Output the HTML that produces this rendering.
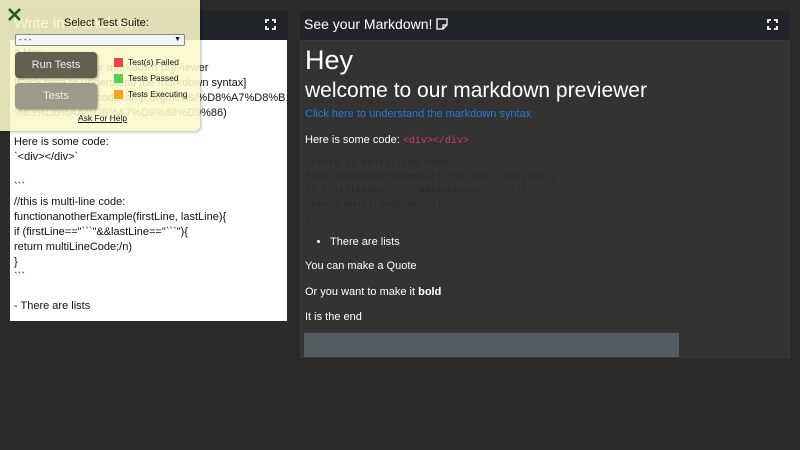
<!DOCTYPE html>
<html><head><meta charset="utf-8"><style>
*{box-sizing:border-box;margin:0;padding:0}
body{width:800px;height:450px;background:#2b2b2b;font-family:"Liberation Sans",sans-serif;position:relative;overflow:hidden}
.hdr{position:absolute;background:#212529;color:#fff;font-size:15px;height:30px;line-height:28px;padding-left:4px;border-radius:4px 4px 0 0}
.fs{position:absolute;right:12px;top:9px;width:11px;height:11px}
#lt{left:10px;top:10px;width:278px}
#ta{position:absolute;left:10px;top:40px;width:277px;height:281px;background:#fff;color:#111;font-size:11px;line-height:14.9px;padding:6px 4px;white-space:pre;overflow:hidden}
#rt{left:300px;top:10px;width:490px;font-size:14px}
#pv{position:absolute;left:300px;top:40px;width:490px;height:318px;background:#333;color:#fff;padding:0 4px;border:1px solid #3a3a3a;overflow:hidden}
h1{font-weight:normal;font-size:27px;margin-top:3px;line-height:32px}
h2{font-weight:normal;font-size:21px;line-height:26px;margin-top:2px}
p{font-size:11px;margin-top:9px;line-height:14px}
a{color:#2a78d6;text-decoration:none}
code{font-family:"Liberation Mono",monospace;color:#d63384;font-size:10px}
pre{font-family:"Liberation Mono",monospace;color:#2a2a2a;font-size:9.5px;line-height:13.5px;margin-top:7px}
ul{font-size:11px;margin:12px 0 0 25px}
#ov{position:absolute;left:0;top:0;width:200px;height:131px;background:rgba(250,248,200,0.88);border-radius:0 0 6px 0;box-shadow:1px 1px 3px rgba(0,0,0,.3);font-size:10px;color:#111}
.btn{position:absolute;left:15px;width:82px;height:26px;border-radius:4px;color:#eee;font-size:11px;text-align:center;line-height:26px;box-shadow:1px 1px 2px rgba(0,0,0,.4)}
.lg{position:absolute;left:114px;width:9px;height:9px}
.lt{position:absolute;left:128px;font-size:8.5px}
</style></head><body>
<div class="hdr" id="lt">Write in Markdown<svg class="fs" viewBox="0 0 11 11" fill="none" stroke="#fff" stroke-width="1.8"><path d="M1 4V1h3M7 1h3v3M10 7v3H7M4 10H1V7"/></svg></div>
<div id="ta"># Hey
## welcome to our markdown previewer
[Click here to understand the markdown syntax]
(https://www.freecodecamp.org/news/%D8%A7%D8%B1%D
%83%D8%AA%D8%A7%D9%88%D9%86)

Here is some code:
&#96;&lt;div&gt;&lt;/div&gt;&#96;

&#96;&#96;&#96;
//this is multi-line code:
functionanotherExample(firstLine, lastLine){
if (firstLine=="&#96;&#96;&#96;"&amp;&amp;lastLine=="&#96;&#96;&#96;"){
return multiLineCode;/n)
}
&#96;&#96;&#96;

- There are lists</div>
<div class="hdr" id="rt">See your Markdown! <svg width="12" height="12" viewBox="0 0 12 12" style="vertical-align:-1px" fill="none" stroke="#fff" stroke-width="1.3"><path d="M1 1h10v6l-4 4H1z M7 11V7h4"/></svg><svg class="fs" viewBox="0 0 11 11" fill="none" stroke="#fff" stroke-width="1.8"><path d="M1 4V1h3M7 1h3v3M10 7v3H7M4 10H1V7"/></svg></div>
<div id="pv">
<h1>Hey</h1>
<h2>welcome to our markdown previewer</h2>
<p style="margin-top:3px"><a>Click here to understand the markdown syntax</a></p>
<p style="margin-top:12px">Here is some code: <code>&lt;div&gt;&lt;/div&gt;</code></p>
<pre>//this is multi-line code:
functionanotherExample(firstLine, lastLine){
if (firstLine=="&#96;&#96;&#96;"&amp;&amp;lastLine=="&#96;&#96;&#96;"){
return multiLineCode;/n)
}</pre>
<ul><li>There are lists</li></ul>
<p style="margin-top:11px">You can make a Quote</p>
<p style="margin-top:12px">Or you want to make it <b>bold</b></p>
<p style="margin-top:11px">It is the end</p>
<div style="position:absolute;left:3px;top:292px;width:375px;height:30px;background:#545b62"></div>
</div>
<div id="ov">
<svg style="position:absolute;left:8px;top:8px" width="13" height="13" viewBox="0 0 13 13" stroke="#1a5e1a" stroke-width="2.6"><path d="M1 1l11 11M12 1L1 12"/></svg>
<div style="position:absolute;left:64px;top:17px;font-size:11px">Select Test Suite:</div>
<div style="position:absolute;left:15px;top:34px;width:170px;height:12px;background:#f4f4f4;border:1px solid #888;border-radius:2px;font-size:8px;line-height:10px;padding-left:3px">- - -<span style="position:absolute;right:3px;font-size:7px">&#9660;</span></div>
<div class="btn" style="top:52px;background:#62604f">Run Tests</div>
<div class="btn" style="top:83px;background:#9c9a88">Tests</div>
<div class="lg" style="top:58px;background:#f04444"></div><div class="lt" style="top:57px">Test(s) Failed</div>
<div class="lg" style="top:74px;background:#55d055"></div><div class="lt" style="top:73px">Tests Passed</div>
<div class="lg" style="top:90px;background:#f4a020"></div><div class="lt" style="top:89px">Tests Executing</div>
<div style="position:absolute;left:78px;top:113px;font-size:8.5px;text-decoration:underline">Ask For Help</div>
</div>
</body></html>
